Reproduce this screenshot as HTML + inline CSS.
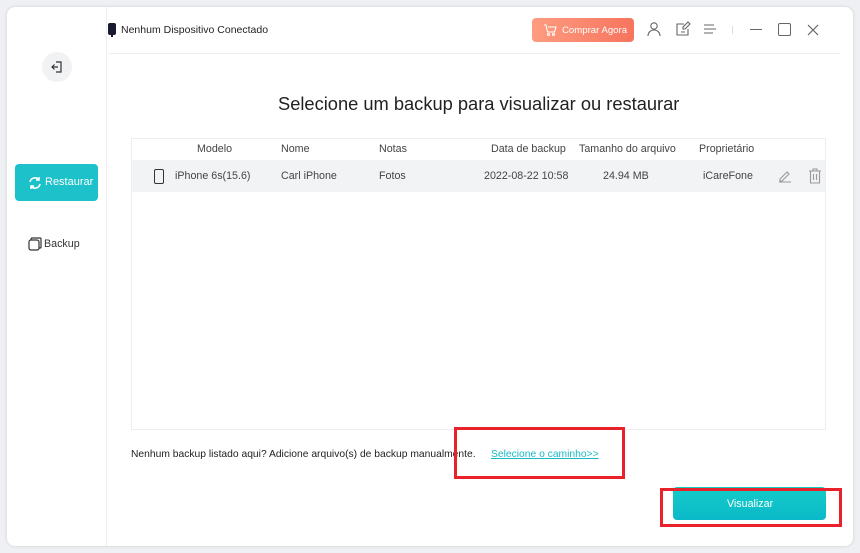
<!DOCTYPE html>
<html><head><meta charset="utf-8"><style>
*{margin:0;padding:0;box-sizing:border-box}
body{width:860px;height:553px;background:#eef0f3;font-family:"Liberation Sans",sans-serif;position:relative;overflow:hidden;color:#333}
.win{position:absolute;left:7px;top:7px;width:846px;height:539px;background:#fff;border-radius:8px;box-shadow:0 0 3px rgba(0,0,0,.15)}
.side{position:absolute;left:7px;top:7px;width:100px;height:539px;border-right:1px solid #eceef1}
.abs{position:absolute}
.t{position:absolute;font-size:10.7px;color:#444;white-space:nowrap}
</style></head><body>
<div class="win"></div>
<div class="side"></div>
<div class="abs" style="left:108px;top:53px;width:732px;height:1px;background:#eef0f3"></div>
<div class="abs" style="left:42px;top:52px;width:30px;height:30px;border-radius:50%;background:#f1f2f4"></div>
<svg class="abs" style="left:49px;top:59px" width="16" height="16" viewBox="0 0 16 16" fill="none" stroke="#333" stroke-width="1.2"><path d="M7 3h5v10H7M9 8H3M5.5 5.5L3 8l2.5 2.5"/></svg>
<div class="abs" style="left:15px;top:164px;width:83px;height:37px;background:#1cc1c9;border-radius:4px"></div>
<svg class="abs" style="left:28px;top:176px" width="14" height="14" viewBox="0 0 14 14" fill="none" stroke="#fff" stroke-width="1.6"><path d="M2 6a5 5 0 0 1 9-2M12 8a5 5 0 0 1-9 2"/><path d="M11 1v3H8M3 13v-3h3"/></svg>
<div class="t" style="left:45px;top:176px;color:#fff;font-size:11px">Restaurar</div>
<svg class="abs" style="left:28px;top:237px" width="14" height="14" viewBox="0 0 14 14" fill="none" stroke="#333" stroke-width="1.2"><rect x="1" y="3" width="10" height="10" rx="2"/><path d="M3 3V2a1 1 0 0 1 1-1h8a1 1 0 0 1 1 1v8a1 1 0 0 1-1 1h-1"/></svg>
<div class="t" style="left:44px;top:238px;color:#333">Backup</div>
<div class="abs" style="left:108px;top:23px;width:8px;height:12px;background:#1a1a2e;border-radius:2px"></div>
<div class="abs" style="left:111px;top:34px;width:2px;height:3px;background:#1a1a2e"></div>
<div class="t" style="left:121px;top:24px;color:#222;font-size:10.5px">Nenhum Dispositivo Conectado</div>
<div class="abs" style="left:532px;top:18px;width:102px;height:24px;border-radius:4px;background:linear-gradient(90deg,#fd9c80,#f7745e)"></div>
<svg class="abs" style="left:544px;top:24px" width="13" height="12" viewBox="0 0 13 12" fill="none" stroke="#fff" stroke-width="1.1"><path d="M0 1h2l1.5 7h7L12 3H4"/><circle cx="4.5" cy="10.5" r="1"/><circle cx="9.5" cy="10.5" r="1"/></svg>
<div class="t" style="left:562px;top:25px;color:#fff;font-size:9.6px">Comprar Agora</div>
<svg class="abs" style="left:646px;top:21px" width="16" height="16" viewBox="0 0 16 16" fill="none" stroke="#666" stroke-width="1.1"><circle cx="8" cy="5" r="3.2"/><path d="M2 15c0-3.5 2.7-6 6-6s6 2.5 6 6"/></svg>
<svg class="abs" style="left:675px;top:21px" width="16" height="16" viewBox="0 0 16 16" fill="none" stroke="#666" stroke-width="1.1"><path d="M9 3H2v11h11V8M6 11h4M13 1l2 2-5 5H8V6z"/></svg>
<svg class="abs" style="left:703px;top:23px" width="14" height="12" viewBox="0 0 14 12" fill="none" stroke="#666" stroke-width="1.1"><path d="M1 2h10M1 6h12M1 10h9"/></svg>
<div class="abs" style="left:732px;top:26px;width:1px;height:8px;background:#d8dce3"></div>
<div class="abs" style="left:750px;top:29px;width:12px;height:1px;background:#666"></div>
<div class="abs" style="left:778px;top:23px;width:13px;height:13px;border:1.2px solid #666;border-radius:2px"></div>
<svg class="abs" style="left:807px;top:24px" width="12" height="12" viewBox="0 0 12 12" stroke="#666" stroke-width="1.2"><path d="M1 1l10 10M11 1L1 11"/></svg>
<div class="t" style="left:278px;top:93px;font-size:18.3px;color:#222">Selecione um backup para visualizar ou restaurar</div>
<div class="abs" style="left:131px;top:138px;width:695px;height:292px;border:1px solid #eceef1"></div>
<div class="abs" style="left:132px;top:160px;width:693px;height:32px;background:#f2f3f5"></div>
<div class="t" style="left:197px;top:143px">Modelo</div>
<div class="t" style="left:281px;top:143px">Nome</div>
<div class="t" style="left:379px;top:143px">Notas</div>
<div class="t" style="left:491px;top:143px">Data de backup</div>
<div class="t" style="left:579px;top:143px">Tamanho do arquivo</div>
<div class="t" style="left:699px;top:143px">Proprietário</div>
<div class="abs" style="left:154px;top:169px;width:10px;height:15px;border:1.3px solid #333;border-radius:2px"></div>
<div class="t" style="left:175px;top:170px">iPhone 6s(15.6)</div>
<div class="t" style="left:281px;top:170px">Carl iPhone</div>
<div class="t" style="left:379px;top:170px">Fotos</div>
<div class="t" style="left:484px;top:170px">2022-08-22 10:58</div>
<div class="t" style="left:603px;top:170px">24.94 MB</div>
<div class="t" style="left:703px;top:170px">iCareFone</div>
<svg class="abs" style="left:778px;top:169px" width="14" height="14" viewBox="0 0 14 14" fill="none" stroke="#999" stroke-width="1.1"><path d="M2 10l7-7 2 2-7 7H2zM1 13h12"/></svg>
<svg class="abs" style="left:808px;top:168px" width="14" height="16" viewBox="0 0 14 16" fill="none" stroke="#999" stroke-width="1.1"><path d="M1 3h12M5 3V1h4v2M2.5 3v12h9V3M5.5 6v6M8.5 6v6"/></svg>
<div class="t" style="left:131px;top:449px;color:#222;font-size:10.3px">Nenhum backup listado aqui? Adicione arquivo(s) de backup manualmente.</div>
<div class="t" style="left:491px;top:449px;color:#1ab8c4;text-decoration:underline;font-size:10.3px">Selecione o caminho&gt;&gt;</div>
<div class="abs" style="left:673px;top:487px;width:153px;height:33px;border-radius:4px;background:linear-gradient(180deg,#15ccc8,#0ab9c8)"></div>
<div class="t" style="left:727px;top:498px;color:#fff">Visualizar</div>
<div class="abs" style="left:454px;top:427px;width:171px;height:52px;border:3px solid #e8212b"></div>
<div class="abs" style="left:660px;top:488px;width:182px;height:39px;border:3px solid #e8212b"></div>
</body></html>
